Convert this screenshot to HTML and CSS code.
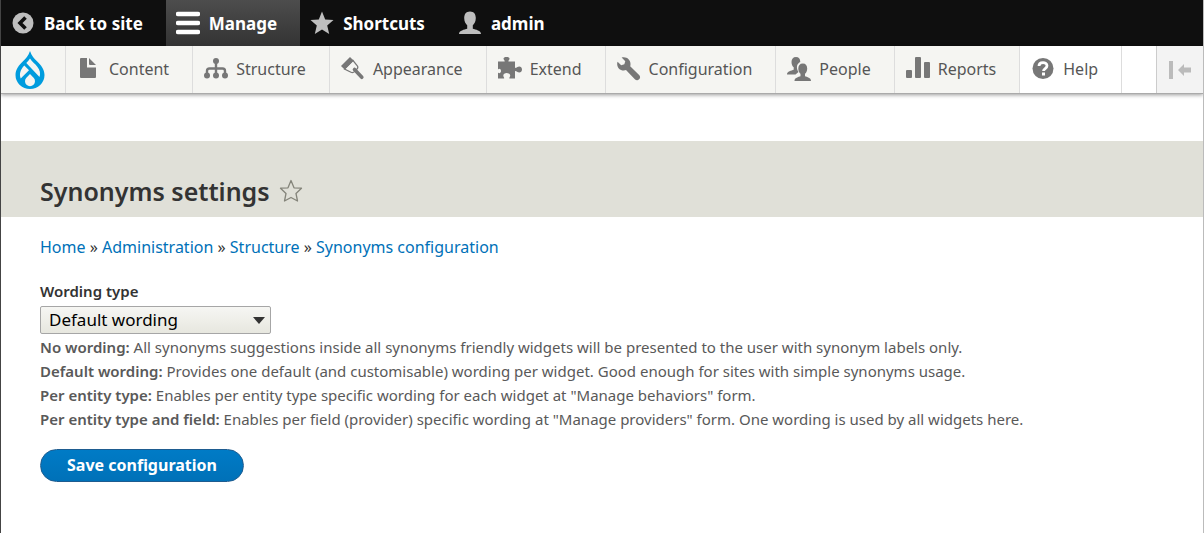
FILE: index.html
```
<!DOCTYPE html>
<html lang="en">
<head>
    <meta charset="UTF-8">
    <meta name="viewport" content="width=device-width, initial-scale=1.0">
    <title>Synonyms settings</title>
    <link rel="stylesheet" href="styles.css">
</head>
<body>

    <nav class="toolbar-bar">
        <a class="bar-tab" href="#">
            <svg class="icon" viewBox="0 0 24 24"><circle cx="12" cy="12" r="10.500" fill="#bebebe"/><path d="M14.500 6.500L9 12l5.500 5.500" fill="none" stroke="#0f0f0f" stroke-width="3.600"/></svg>
            Back to site
        </a>
        <a class="bar-tab active" href="#">
            <svg class="icon" viewBox="0 0 24 24"><path d="M2 3h20M2 12h20M2 21h20" stroke="#fff" stroke-width="4.600" stroke-linecap="round"/></svg>
            Manage
        </a>
        <a class="bar-tab" href="#">
            <svg class="icon" viewBox="0 0 24 24" fill="#bebebe"><path d="M12 .500l3.200 7.900 8.300.6-6.300 5.500 2 8.500-7.200-4.500L4.800 23l2-8.500L.500 9l8.300-.6z"/></svg>
            Shortcuts
        </a>
        <a class="bar-tab" href="#">
            <svg class="icon" viewBox="0 0 24 24" fill="#bebebe"><path d="M12 .500c-4 0-5.800 2.800-5.800 6.500 0 3.800 1.500 5.700 3 7.200v3.500c-2.700.8-8.200 1.800-8.200 5.300h22c0-3.500-5.500-4.500-8.200-5.300v-3.500c1.500-1.500 3-3.400 3-7.200C17.800 3.300 16 .500 12 .500z"/></svg>
            admin
        </a>
    </nav>

    <nav class="toolbar-tray">
        <a class="logo" href="#" aria-label="Home">
            <svg viewBox="0 0 30 38"><path fill="#009cde" d="M15 0c-1.500 5-4.300 7.500-7 10.300C4 14.300 0.500 18.300 0.500 24a14.500 14 0 0 0 29 0c0-5.700-3.500-9.700-7.500-13.700C19.300 7.500 16.500 5 15 0z"/><path fill="#f5f5f2" d="M15 7.500c2 3 5 5.300 7.300 8.200 2.700 3.200 3.400 6.800 2.200 10.300L11.300 12c1.500-1.500 2.800-3 3.700-4.500zM9.300 14.500l4.700 4.800-8.300 8.200c-1.700-4.500-.4-8.800 3.600-13z"/><path fill="#f5f5f2" d="M15 23l3.600 3.800a5 5 0 1 1-7.200 0z"/></svg>
        </a>
        <a class="tray-tab" href="#">
            <svg class="icon" viewBox="0 0 24 24"><path d="M4 1h6v9.500h9V20a1 1 0 0 1-1 1H4a1 1 0 0 1-1-1V2a1 1 0 0 1 1-1zM12 1l7 7h-6a1 1 0 0 1-1-1z"/></svg>
            Content
        </a>
        <a class="tray-tab" href="#">
            <svg class="icon" viewBox="0 0 24 24"><circle cx="12" cy="4" r="3"/><circle cx="3" cy="18.500" r="3"/><circle cx="12" cy="18.500" r="3"/><circle cx="21" cy="18.500" r="3"/><path d="M12 4v14M3 18v-4q0-2.500 2.500-2.500h13q2.500 0 2.500 2.500v4" fill="none" stroke="#777" stroke-width="2.400"/></svg>
            Structure
        </a>
        <a class="tray-tab" href="#">
            <svg class="icon" viewBox="0 0 24 24"><path d="M0 9L9 0l3.600 3.600-9 9z"/><path d="M3.500 12l8.500-8.500 4.500 5.500c1 1.500.2 2.500-1 3.700l-1.700 1.700c-1.200 1.200-2.200 1.800-3.800.9z" fill="none" stroke="#777" stroke-width="1.200"/><path d="M13.500 12.500l7.300 7.800" stroke="#777" stroke-width="3.600" stroke-linecap="round"/></svg>
            Appearance
        </a>
        <a class="tray-tab" href="#">
            <svg class="icon" viewBox="0 0 24 24"><path d="M0 4.500h6.500c.6-.4 0-1-.7-2C5 1 6 0 8.500 0S12 1 11.300 2.500c-.7 1-1.300 1.600-.7 2H17v6c.4.700 1 .5 2-.2 2-1.500 5-1 5 2.200s-3 3.700-5 2.200c-1-.7-1.600-.9-2-.2v7h-5.500c-.5-.5 0-1 .5-2 .8-2-1-3.600-3.300-3.600s-4 1.600-3.200 3.600c.5 1 1 1.500.5 2H0v-6c1 1.500 3 .500 3-1.500s-2-3-3-1.500z"/></svg>
            Extend
        </a>
        <a class="tray-tab" href="#">
            <svg class="icon" viewBox="0 0 16 16"><path d="M14.900 12.100L8.800 6.200c.2-.5.200-.9.200-1.500C9 2.100 7 .2 4.500.2c-.5 0-1 .1-1.400.2L5.500 2.800l-.6 2.100-2.100.6L.400 3.100C.2 3.600.1 4 .1 4.600.1 7 2 9 4.500 9c.5 0 1-.1 1.500-.3l5.900 6.100c.8.8 2 .9 2.800.1.900-.8.900-2 .2-2.800z"/></svg>
            Configuration
        </a>
        <a class="tray-tab" href="#">
            <svg class="icon" viewBox="0 0 24 24"><path d="M9 0C6 0 4.500 2 4.500 5c0 2.800 1 4.300 2.200 5.300v2.500C4.500 13.700 0 14.300 0 17.500h8.500l3-2.500c-1.500-2-1.700-4-1.500-6C10.500 7 12 5.500 13.300 5 13.200 1.500 11.800 0 9 0z"/><path d="M15.800 6.500c-3 0-4.500 2-4.500 5 0 2.800 1 4.300 2.200 5.300v2.500C11.500 20.200 7.500 20.500 7.500 24H24c0-3.500-4-3.800-6-4.700v-2.500c1.200-1 2.200-2.500 2.200-5.300 0-3-1.400-5-4.400-5z"/></svg>
            People
        </a>
        <a class="tray-tab" href="#">
            <svg class="icon" viewBox="0 0 24 24"><rect x="0" y="13" width="6" height="8" rx="1"/><rect x="9" y="0" width="6" height="21" rx="1"/><rect x="18" y="5" width="6" height="16" rx="1"/></svg>
            Reports
        </a>
        <a class="tray-tab help" href="#">
            <svg class="icon" viewBox="0 0 24 24"><circle cx="12" cy="11.500" r="10.500"/><path d="M8 9C8 4.500 16 4.500 16 8.800c0 2.700-3.500 2.700-3.500 5.200" fill="none" stroke="#fff" stroke-width="2.800"/><rect x="11" y="15.500" width="3" height="3" fill="#fff"/></svg>
            Help
        </a>
        <button class="tray-toggle" type="button" aria-label="Vertical orientation">
            <svg class="icon" viewBox="0 0 24 24"><path d="M1 3h4v18H1zM10 12l6-6v3.500h7v5h-7V18z"/></svg>
        </button>
    </nav>

    <header class="page-header">
        <h1>Synonyms settings</h1>
        <svg class="star" viewBox="0 0 24 24"><path d="M12 1.500l3 7.300 7.500.4-5.500 5.300 1.500 7.500L12 18.500 5.500 22 7 14.500 1.500 9.200 9 8.800z" fill="none" stroke="#84847a" stroke-width="1.300" stroke-linejoin="round"/></svg>
    </header>

    <main class="page-content">
        <nav class="breadcrumb">
            <a href="#">Home</a> » <a href="#">Administration</a> » <a href="#">Structure</a> » <a href="#">Synonyms configuration</a>
        </nav>

        <form class="settings-form">
            <label for="wording-type">Wording type</label>
            <div class="select-wrap">
                <select id="wording-type">
                    <option>Default wording</option>
                    <option>No wording</option>
                    <option>Per entity type</option>
                    <option>Per entity type and field</option>
                </select>
            </div>
            <div class="description">
                <strong>No wording:</strong> All synonyms suggestions inside all synonyms friendly widgets will be presented to the user with synonym labels only.<br>
                <strong>Default wording:</strong> Provides one default (and customisable) wording per widget. Good enough for sites with simple synonyms usage.<br>
                <strong>Per entity type:</strong> Enables per entity type specific wording for each widget at "Manage behaviors" form.<br>
                <strong>Per entity type and field:</strong> Enables per field (provider) specific wording at "Manage providers" form. One wording is used by all widgets here.
            </div>
            <button class="save" type="button">Save configuration</button>
        </form>
    </main>

</body>
</html>
```
FILE: styles.css
```
* {
    box-sizing: border-box;
}

body {
    margin: 0;
    min-height: 100vh;
    border-left: 1px solid #444;
    border-right: 1px solid #bbb;
    background: #fff;
    color: #333;
    font-family: "Noto Sans", sans-serif;
    font-size: 15px;
}

a {
    color: #0071b8;
    text-decoration: none;
}

/* Black bar */
.toolbar-bar {
    display: flex;
    height: 46px;
    background: #0f0f0f;
}

.bar-tab {
    display: flex;
    align-items: center;
    gap: 9px;
    padding: 0 23px 0 10px;
    color: #fff;
    font-size: 17px;
    font-weight: bold;
}

.bar-tab.active {
    background: linear-gradient(#4d4d4d, #333);
}

.icon {
    width: 24px;
    height: 24px;
    flex: none;
}

/* Tray */
.toolbar-tray {
    display: flex;
    height: 48px;
    background: #fff;
    border-bottom: 1px solid #aaa;
    box-shadow: 0 1px 4px rgba(0, 0, 0, 0.4);
}

.logo {
    display: flex;
    align-items: center;
    padding: 0 20px 0 14px;
    background: #f5f5f2;
}

.logo svg {
    width: 30px;
    height: 38px;
}

.tray-tab {
    display: flex;
    align-items: center;
    gap: 8px;
    padding: 0 23px 1px 11px;
    border-left: 1px solid #ddd;
    background: #f5f5f2;
    color: #565656;
    font-size: 16px;
}

.tray-tab .icon {
    fill: #777;
}

.tray-tab.help {
    border-right: 1px solid #ddd;
    background: #fff;
}

.tray-toggle {
    margin-left: auto;
    padding: 0 11px;
    border: 0;
    border-left: 1px solid #ccc;
    background: #f3f3f3;
}

.tray-toggle .icon {
    display: block;
    fill: #bbb;
}

/* Page title */
.page-header {
    display: flex;
    align-items: center;
    gap: 9px;
    margin-top: 47px;
    padding: 32px 39px 8px;
    background: #e0e0d8;
}

.page-header h1 {
    margin: 0;
    font-size: 25px;
    font-weight: 600;
    line-height: 36px;
}

.star {
    width: 24px;
    height: 24px;
}

/* Content */
.page-content {
    padding: 18px 39px;
}

.breadcrumb {
    font-size: 16px;
    line-height: 24px;
}

.settings-form {
    display: flex;
    flex-direction: column;
    align-items: flex-start;
    margin-top: 20px;
}

.settings-form label {
    font-weight: 600;
    line-height: 24px;
}

.select-wrap {
    position: relative;
    margin: 3px 0 1px;
}

.select-wrap::after {
    content: "";
    position: absolute;
    right: 6px;
    top: 11px;
    border: 6px solid transparent;
    border-top: 7px solid #333;
    border-bottom: 0;
    pointer-events: none;
}

.select-wrap select {
    appearance: none;
    display: block;
    width: 231px;
    height: 28px;
    padding: 0 8px 2px;
    border: 1px solid #a6a6a6;
    border-radius: 2px;
    background: linear-gradient(#f6f6f3, #e7e7df);
    color: #000;
    font-family: inherit;
    font-size: 17px;
}

.description {
    color: #595959;
    font-size: 15px;
    line-height: 24px;
}

.description strong {
    font-weight: 600;
}

.save {
    height: 33px;
    margin-top: 18px;
    padding: 0 26px 2px;
    border: 1px solid #1e5c90;
    border-radius: 17px;
    background: linear-gradient(#007bc6, #0071b8);
    color: #fff;
    font-family: inherit;
    font-size: 16px;
    font-weight: bold;
}
```
